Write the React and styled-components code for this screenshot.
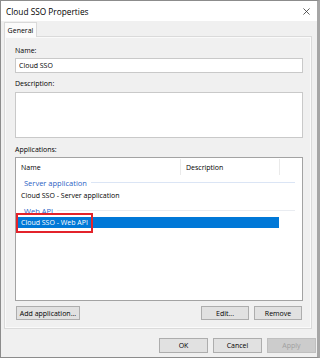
import React from 'react';
import styled, { createGlobalStyle } from 'styled-components';

const GlobalStyle = createGlobalStyle`
  html, body {
    margin: 0;
    padding: 0;
    background: #ffffff;
  }
  body {
    font-family: 'Open Sans', 'Noto Sans', sans-serif;
  }
`;

const apps = [
  { group: 'Server application', items: ['Cloud SSO - Server application'], top: 1 },
  { group: 'Web API', items: ['Cloud SSO - Web API'], top: 4, selected: 0 },
];

const App = () => {
  return (
    <>
      <GlobalStyle />
      <Window>
        <TitleBar>
          <TitleText>Cloud SSO Properties</TitleText>
          <CloseIcon viewBox="0 0 8 8">
            <path d="M0.5 0.5 L7.5 7.5 M7.5 0.5 L0.5 7.5" stroke="#333" strokeWidth="0.9" />
          </CloseIcon>
        </TitleBar>
        <TabStrip>
          <Tab>General</Tab>
        </TabStrip>
        <Panel>
          <Label>Name:</Label>
          <TextInput readOnly value="Cloud SSO" />
          <Label $top={6}>Description:</Label>
          <TextArea readOnly />
          <Label $top={7}>Applications:</Label>
          <ListBox>
            <Header>
              <HeaderCell $width={165}>Name</HeaderCell>
              <HeaderCell $width={99}>Description</HeaderCell>
            </Header>
            {apps.map(a => (
              <React.Fragment key={a.group}>
                <Group $top={a.top} $line={a.selected === undefined ? '#dbe5f5' : '#e9ecf1'}>
                  <span>{a.group}</span>
                </Group>
                {a.items.map((item, i) =>
                  a.selected === i ? (
                    <SelectedRow key={item}>
                      {item}
                      <Highlight />
                    </SelectedRow>
                  ) : (
                    <Row key={item}>{item}</Row>
                  )
                )}
              </React.Fragment>
            ))}
          </ListBox>
          <ButtonRow>
            <Button $width={64}>Add application...</Button>
            <Spacer />
            <Button $width={48}>Edit...</Button>
            <Button $width={48}>Remove</Button>
          </ButtonRow>
        </Panel>
        <Footer>
          <Button $width={49} $height={15}>OK</Button>
          <Button $width={49} $height={15}>Cancel</Button>
          <Button $width={49} $height={15} $disabled>Apply</Button>
        </Footer>
      </Window>
    </>
  );
};

export default App;

const Window = styled.div`
  box-sizing: border-box;
  width: 320px;
  height: 358px;
  display: flex;
  flex-direction: column;
  background: #f0f0f0;
  border: 1px solid #8c8c8c;
  border-right: 3px solid #a6a6a6;
  font-size: 7px;
  color: #000;
`;

const TitleBar = styled.div`
  height: 20px;
  flex-shrink: 0;
  display: flex;
  align-items: center;
  justify-content: space-between;
  padding: 0 5px 0 5px;
  background: #fff;
`;

const TitleText = styled.span`
  font-size: 8.3px;
  color: #000;
`;

const CloseIcon = styled.svg`
  width: 7px;
  height: 7px;
  margin-right: 2px;
`;

const TabStrip = styled.div`
  height: 15px;
  flex-shrink: 0;
  display: flex;
  align-items: flex-end;
  padding-left: 3px;
`;

const Tab = styled.div`
  box-sizing: border-box;
  width: 33px;
  height: 15px;
  display: flex;
  align-items: center;
  justify-content: center;
  background: #fbfbfb;
  border: 1px solid #d9d9d9;
  border-bottom: none;
  margin-bottom: -1px;
  position: relative;
  z-index: 1;
`;

const Panel = styled.div`
  box-sizing: border-box;
  height: 293px;
  margin: 0 5px 0 3px;
  padding: 9px 8px 0 10px;
  display: flex;
  flex-direction: column;
  background: #f0f0f0;
  border: 1px solid #dadada;
  box-shadow: inset 0 0 0 1px #fafafa;
`;

const Label = styled.div`
  height: 10px;
  line-height: 10px;
  margin-top: ${p => p.$top || 0}px;
  margin-bottom: 2px;
`;

const TextInput = styled.input`
  box-sizing: border-box;
  height: 15px;
  width: 100%;
  margin: 0;
  padding: 0 3px;
  border: 1px solid #c9c9c9;
  background: #fff;
  font-family: inherit;
  font-size: 7px;
  outline: none;
`;

const TextArea = styled.textarea`
  box-sizing: border-box;
  height: 46px;
  width: 100%;
  margin: 1px 0 0;
  border: 1px solid #c9c9c9;
  background: #fff;
  resize: none;
  outline: none;
`;

const ListBox = styled.div`
  box-sizing: border-box;
  height: 144px;
  display: flex;
  flex-direction: column;
  background: #fff;
  border: 1px solid #a3a3a3;
`;

const Header = styled.div`
  height: 18px;
  display: flex;
  align-items: stretch;
  flex-shrink: 0;
`;

const HeaderCell = styled.div`
  box-sizing: border-box;
  width: ${p => p.$width}px;
  padding-left: 5px;
  display: flex;
  align-items: center;
  border-right: 1px solid #eaeaea;
  margin: 1px 0;
`;

const Group = styled.div`
  height: 11px;
  margin-top: ${p => p.$top}px;
  padding-left: 8px;
  margin-right: 7px;
  display: flex;
  align-items: center;
  gap: 4px;
  color: #2b5fc4;
  font-size: 7.5px;
  &::after {
    content: '';
    flex: 1;
    height: 1px;
    background: ${p => p.$line};
  }
`;

const Row = styled.div`
  height: 12px;
  margin-top: 1px;
  padding-left: 5px;
  display: flex;
  align-items: center;
`;

const SelectedRow = styled.div`
  position: relative;
  height: 11px;
  width: 262px;
  margin: 1px 0 0 1px;
  padding-left: 4px;
  box-sizing: border-box;
  display: flex;
  align-items: center;
  background: #0078d7;
  color: #fff;
`;

const Highlight = styled.div`
  position: absolute;
  left: -1px;
  top: -4px;
  width: 77px;
  height: 20px;
  box-sizing: border-box;
  border: 2px solid #e3232b;
`;

const ButtonRow = styled.div`
  display: flex;
  gap: 5px;
  margin-top: 5px;
  padding-left: 1px;
  padding-right: 1px;
`;

const Spacer = styled.div`
  flex: 1;
`;

const Button = styled.div`
  box-sizing: border-box;
  width: ${p => p.$width}px;
  height: ${p => p.$height || 14}px;
  display: flex;
  align-items: center;
  justify-content: center;
  background: ${p => (p.$disabled ? '#cccccc' : '#e1e1e1')};
  border: 1px solid ${p => (p.$disabled ? '#bfbfbf' : '#adadad')};
  color: ${p => (p.$disabled ? '#a0a0a0' : '#000')};
`;

const Footer = styled.div`
  flex: 1;
  display: flex;
  justify-content: flex-end;
  align-items: flex-start;
  gap: 5px;
  padding: 9px 1px 0 0;
`;
